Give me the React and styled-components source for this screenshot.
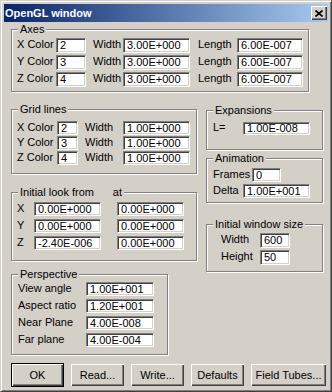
import styled, { createGlobalStyle } from "styled-components";

const GlobalStyle = createGlobalStyle`
  html, body {
    margin: 0;
    padding: 0;
    background: #d4d0c8;
  }
  body {
    font-family: "Liberation Sans", Arial, sans-serif;
    font-size: 11px;
    color: #000;
  }
`;

const Window = styled.div`
  box-sizing: border-box;
  width: 332px;
  height: 392px;
  padding: 3px;
  background: #d4d0c8;
  border: 1px solid;
  border-color: #d4d0c8 #404040 #404040 #d4d0c8;
  box-shadow: inset 1px 1px 0 #fff, inset -1px -1px 0 #808080;
  display: flex;
  flex-direction: column;
`;

const TitleBar = styled.div`
  height: 18px;
  flex: none;
  display: flex;
  align-items: center;
  justify-content: space-between;
  padding: 0 1px;
  background: linear-gradient(to right, #0a246a, #a6caf0);
`;

const Title = styled.span`
  color: #fff;
  font-weight: bold;
  font-size: 11px;
  line-height: 13px;
`;

const CloseButton = styled.div`
  box-sizing: border-box;
  width: 16px;
  height: 14px;
  display: flex;
  align-items: center;
  justify-content: center;
  background: #d4d0c8;
  box-shadow: inset 1px 1px 0 #fff, inset -1px -1px 0 #404040,
    inset -2px -2px 0 #808080;
`;

const Body = styled.div`
  display: flex;
  flex-direction: column;
  padding-left: 7px;
`;

const Columns = styled.div`
  display: flex;
  margin-top: 17px;
`;

const Column = styled.div`
  display: flex;
  flex-direction: column;
  width: ${({ $w }) => $w}px;
  margin-left: ${({ $ml }) => $ml || 0}px;
`;

const Group = styled.div`
  position: relative;
  box-sizing: border-box;
  flex: none;
  width: ${({ $w }) => $w}px;
  height: ${({ $h }) => $h}px;
  margin-top: ${({ $mt }) => $mt || 0}px;
  padding: ${({ $pt }) => $pt}px 0 0 ${({ $pl }) => $pl}px;
  border: 1px solid #808080;
  box-shadow: inset 1px 1px 0 #fff, 1px 1px 0 #fff;
  display: flex;
  flex-direction: column;
  gap: ${({ $gap }) => $gap || 0}px;
`;

const Legend = styled.div`
  position: absolute;
  top: -7px;
  left: 6px;
  box-sizing: border-box;
  width: ${({ $w }) => ($w ? `${$w}px` : "auto")};
  padding: 0 2px;
  background: #d4d0c8;
  line-height: 13px;
  white-space: nowrap;
  display: flex;
  justify-content: space-between;
`;

const Row = styled.div`
  display: flex;
  align-items: center;
  height: ${({ $h }) => $h}px;
`;

const Label = styled.span`
  box-sizing: border-box;
  flex: none;
  width: ${({ $w }) => $w}px;
  padding-left: ${({ $pl }) => $pl || 0}px;
  padding-bottom: 2px;
  line-height: 13px;
  white-space: nowrap;
`;

const Edit = styled.div`
  box-sizing: border-box;
  flex: none;
  width: ${({ $w }) => $w}px;
  height: 100%;
  margin-left: ${({ $ml }) => $ml || 0}px;
  padding-left: 3px;
  display: flex;
  align-items: center;
  background: #fff;
  border: 1px solid;
  border-color: #808080 #fff #fff #808080;
  box-shadow: inset 1px 1px 0 #404040, inset -1px -1px 0 #d4d0c8;
  line-height: 13px;
  white-space: nowrap;
  overflow: hidden;
`;

const ButtonRow = styled.div`
  display: flex;
  align-items: center;
  gap: 7px;
  height: 24px;
  margin-top: 8px;
`;

const Button = styled.div`
  box-sizing: border-box;
  flex: none;
  width: ${({ $w }) => $w}px;
  height: ${({ $default }) => ($default ? 24 : 22)}px;
  display: flex;
  align-items: center;
  justify-content: center;
  background: #d4d0c8;
  border: ${({ $default }) => ($default ? "1px solid #000" : "none")};
  box-shadow: inset 1px 1px 0 #fff, inset -1px -1px 0 #404040,
    inset -2px -2px 0 #808080;
  line-height: 13px;
  white-space: nowrap;
`;

const axes = [
  ["X Color", "2", "3.00E+000", "6.00E-007"],
  ["Y Color", "3", "3.00E+000", "6.00E-007"],
  ["Z Color", "4", "3.00E+000", "6.00E-007"],
];

const grid = [
  ["X Color", "2", "1.00E+000"],
  ["Y Color", "3", "1.00E+000"],
  ["Z Color", "4", "1.00E+000"],
];

const look = [
  ["X", "0.00E+000", "0.00E+000"],
  ["Y", "0.00E+000", "0.00E+000"],
  ["Z", "-2.40E-006", "0.00E+000"],
];

const perspective = [
  ["View angle", "1.00E+001"],
  ["Aspect ratio", "1.20E+001"],
  ["Near Plane", "4.00E-008"],
  ["Far plane", "4.00E-004"],
];

function CloseIcon() {
  return (
    <svg width="8" height="7" viewBox="0 0 8 7">
      <path d="M0.5 0.5 L7.5 6.5 M7.5 0.5 L0.5 6.5" stroke="#000" strokeWidth="1.7" fill="none" />
    </svg>
  );
}

export default function App() {
  return (
    <>
      <GlobalStyle />
      <Window>
        <TitleBar>
          <Title>OpenGL window</Title>
          <CloseButton>
            <CloseIcon />
          </CloseButton>
        </TitleBar>

        <Body>
          <Group $w={298} $h={63} $mt={7} $pt={8} $pl={5} $gap={2}>
            <Legend>Axes</Legend>
            {axes.map(([name, color, width, length]) => (
              <Row key={name} $h={15}>
                <Label $w={39}>{name}</Label>
                <Edit $w={30}>{color}</Edit>
                <Label $w={37} $pl={7}>Width</Label>
                <Edit $w={67}>{width}</Edit>
                <Label $w={47} $pl={8}>Length</Label>
                <Edit $w={66}>{length}</Edit>
              </Row>
            ))}
          </Group>

          <Columns>
            <Column $w={186}>
              <Group $w={186} $h={65} $pt={11} $pl={5} $gap={1}>
                <Legend>Grid lines</Legend>
                {grid.map(([name, color, width]) => (
                  <Row key={name} $h={14}>
                    <Label $w={40}>{name}</Label>
                    <Edit $w={21}>{color}</Edit>
                    <Label $w={45} $pl={7}>Width</Label>
                    <Edit $w={67}>{width}</Edit>
                  </Row>
                ))}
              </Group>

              <Group $w={186} $h={69} $mt={18} $pt={9} $pl={5} $gap={3}>
                <Legend $w={106}>
                  <span>Initial look from</span>
                  <span>at</span>
                </Legend>
                {look.map(([axis, from, at]) => (
                  <Row key={axis} $h={14}>
                    <Label $w={17}>{axis}</Label>
                    <Edit $w={67}>{from}</Edit>
                    <Edit $w={67} $ml={16}>{at}</Edit>
                  </Row>
                ))}
              </Group>

              <Group $w={157} $h={81} $mt={13} $pt={7} $pl={6} $gap={3}>
                <Legend>Perspective</Legend>
                {perspective.map(([name, value]) => (
                  <Row key={name} $h={14}>
                    <Label $w={68}>{name}</Label>
                    <Edit $w={68}>{value}</Edit>
                  </Row>
                ))}
              </Group>
            </Column>

            <Column $w={117} $ml={9}>
              <Group $w={117} $h={40} $mt={1} $pt={11} $pl={6}>
                <Legend>Expansions</Legend>
                <Row $h={13}>
                  <Label $w={30}>L=</Label>
                  <Edit $w={67}>1.00E-008</Edit>
                </Row>
              </Group>

              <Group $w={117} $h={45} $mt={8} $pt={9} $pl={6} $gap={2}>
                <Legend>Animation</Legend>
                <Row $h={14}>
                  <Label $w={39}>Frames</Label>
                  <Edit $w={29}>0</Edit>
                </Row>
                <Row $h={14}>
                  <Label $w={30}>Delta</Label>
                  <Edit $w={67}>1.00E+001</Edit>
                </Row>
              </Group>

              <Group $w={117} $h={48} $mt={21} $pt={8} $pl={14} $gap={2}>
                <Legend>Initial window size</Legend>
                <Row $h={15}>
                  <Label $w={39}>Width</Label>
                  <Edit $w={30}>600</Edit>
                </Row>
                <Row $h={15}>
                  <Label $w={39}>Height</Label>
                  <Edit $w={30}>50</Edit>
                </Row>
              </Group>
            </Column>
          </Columns>

          <ButtonRow>
            <Button $w={53} $default>OK</Button>
            <Button $w={53}>Read...</Button>
            <Button $w={53}>Write...</Button>
            <Button $w={53}>Defaults</Button>
            <Button $w={75}>Field Tubes...</Button>
          </ButtonRow>
        </Body>
      </Window>
    </>
  );
}
